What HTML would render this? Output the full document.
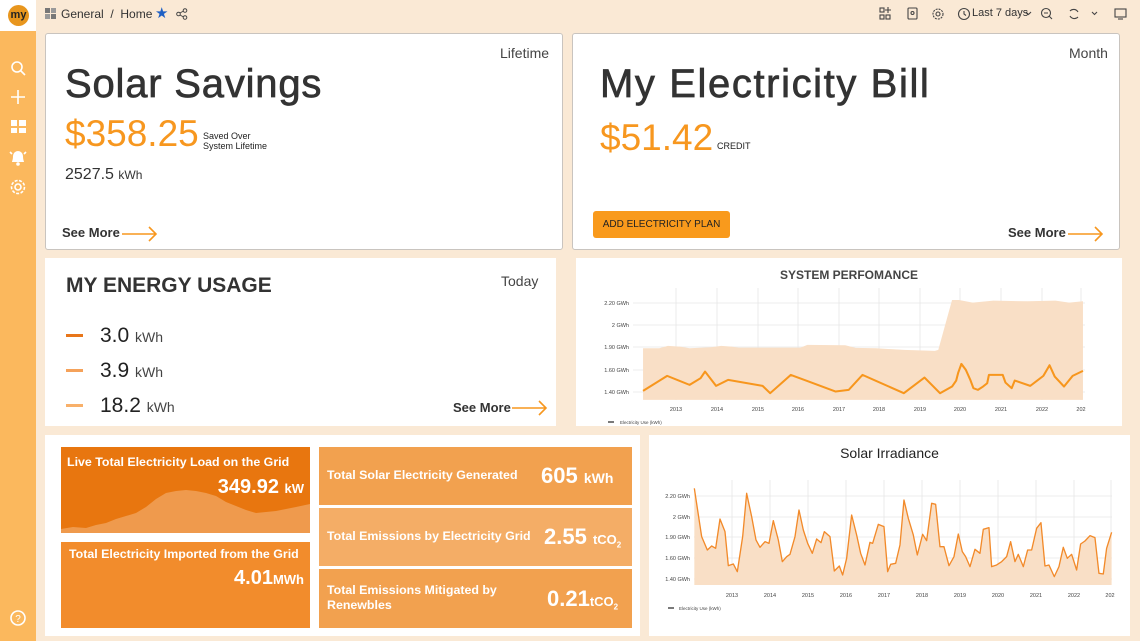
<!DOCTYPE html>
<html><head><meta charset="utf-8"><style>
*{margin:0;padding:0;box-sizing:border-box}
body{width:1140px;height:641px;overflow:hidden;background:#fae9d5;font-family:"Liberation Sans",sans-serif;color:#333;position:relative}
.a{position:absolute}
.panel{position:absolute;background:#fff}
.bord{border:1px solid #c9c4bf;border-radius:3px}
.t{position:absolute;white-space:nowrap}
.tile{position:absolute;color:#fff;overflow:hidden}
.sm{font-size:13px;font-weight:bold;color:#333}
.big{font-size:40px;color:#333;-webkit-text-stroke:0.7px #333}
.tl{font-size:12.4px;font-weight:bold}
</style></head><body>
<!-- sidebar -->
<div class="a" style="left:0;top:0;width:36px;height:31px;background:#fff"></div>
<div class="a" style="left:8px;top:5px;width:21px;height:21px;border-radius:50%;background:#e8961e;color:#222;font-size:11px;font-weight:bold;text-align:center;line-height:20px">my</div>
<div class="a" style="left:0;top:31px;width:36px;height:610px;background:#fbb85d"></div>
<svg class="a" style="left:0;top:31px" width="36" height="610" fill="none" stroke="#fff" stroke-width="1.6">
<circle cx="17" cy="36" r="5"/><path d="M21 40l4 4"/>
<path d="M18 59v14M11 66h14"/>
<g fill="#fff" stroke="none"><rect x="11" y="89" width="6" height="6"/><rect x="19" y="89" width="7" height="6"/><rect x="11" y="97" width="6" height="5"/><rect x="19" y="97" width="7" height="5"/>
<path d="M12 131c0-1 1-2 1-6a5 5 0 0 1 10 0c0 4 1 5 1 6z"/><circle cx="18" cy="133" r="1.8"/></g>
<path d="M10 121l2 2M26 121l-2 2"/>
<circle cx="18" cy="156" r="3"/><circle cx="18" cy="156" r="6.5" stroke-dasharray="3 1.5"/>
<circle cx="18" cy="587" r="7"/><text x="18" y="591" fill="#fff" stroke="none" font-size="10" text-anchor="middle" font-family="Liberation Sans">?</text>
</svg>
<!-- top bar -->
<svg class="a" style="left:45px;top:8px" width="12" height="12"><rect x="0" y="0" width="5" height="5" fill="#777"/><rect x="6" y="0" width="5" height="5" fill="#999"/><rect x="0" y="6" width="5" height="5" fill="#999"/><rect x="6" y="6" width="5" height="5" fill="#777"/></svg>
<div class="t" style="left:61px;top:7px;font-size:12px;color:#333">General&nbsp; /&nbsp; Home</div>
<div class="t" style="left:155px;top:4px;font-size:15px;color:#1f60c4">★</div>
<svg class="a" style="left:176px;top:8px" width="12" height="12" fill="none" stroke="#444" stroke-width="1"><circle cx="9" cy="2.5" r="1.8"/><circle cx="2.5" cy="6" r="1.8"/><circle cx="9" cy="9.5" r="1.8"/><path d="M4 5l3.5-2M4 7l3.5 2"/></svg>
<svg class="a" style="left:878px;top:6px" width="250" height="18" fill="none" stroke="#444" stroke-width="1.1">
<rect x="2" y="2" width="4" height="4"/><rect x="2" y="9" width="4" height="4"/><rect x="8" y="9" width="4" height="4"/><path d="M10 1v6M7 4h6"/>
<rect x="30" y="2" width="9" height="11" rx="1"/><circle cx="34.5" cy="7" r="1.5"/>
<circle cx="60" cy="8" r="5" stroke-dasharray="2 1"/><circle cx="60" cy="8" r="2"/>
<circle cx="86" cy="8" r="5.5"/><path d="M86 5v3l2 1.5"/>
<path d="M148 6l2.5 2.5L153 6"/>
<circle cx="168" cy="7" r="4.5"/><path d="M166 7h4M171 10l3 3"/>
<path d="M192 5a5 5 0 0 1 8 1M200 11a5 5 0 0 1-8-1"/>
<path d="M214 6l2.5 2.5L219 6"/>
<rect x="237" y="3" width="11" height="8"/><path d="M240 13h5"/>
</svg>
<div class="t" style="left:972px;top:7px;font-size:11px;color:#333">Last 7 days</div>

<!-- Solar Savings -->
<div class="panel bord" style="left:45px;top:33px;width:518px;height:217px"></div>
<div class="t" style="left:500px;top:45px;font-size:14px;color:#444">Lifetime</div>
<div class="t big" style="left:65px;top:62px;letter-spacing:0.8px">Solar Savings</div>
<div class="t" style="left:65px;top:113px;font-size:37px;color:#f7971f">$358.25</div>
<div class="t" style="left:203px;top:131px;font-size:9px;line-height:10px;color:#222">Saved Over<br>System Lifetime</div>
<div class="t" style="left:65px;top:166px;font-size:16px;color:#333">2527.5 <span style="font-size:12px">kWh</span></div>
<div class="t sm" style="left:62px;top:225px">See More</div>
<svg class="a" style="left:122px;top:226px" width="37" height="16" fill="none" stroke="#f7971f" stroke-width="1.6"><path d="M0 8h34M27 1l7 7-7 7"/></svg>

<!-- Electricity Bill -->
<div class="panel bord" style="left:572px;top:33px;width:548px;height:217px"></div>
<div class="t" style="left:1069px;top:45px;font-size:14px;color:#444">Month</div>
<div class="t big" style="left:600px;top:62px;letter-spacing:1.6px">My Electricity Bill</div>
<div class="t" style="left:600px;top:117px;font-size:37px;color:#f7971f">$51.42</div>
<div class="t" style="left:717px;top:141px;font-size:9px;color:#222">CREDIT</div>
<div class="a" style="left:593px;top:211px;width:137px;height:27px;background:#f99a1c;border-radius:3px;font-size:10px;color:#222;text-align:center;line-height:27px">ADD ELECTRICITY PLAN</div>
<div class="t sm" style="left:1008px;top:225px">See More</div>
<svg class="a" style="left:1068px;top:226px" width="37" height="16" fill="none" stroke="#f7971f" stroke-width="1.6"><path d="M0 8h34M27 1l7 7-7 7"/></svg>

<!-- Energy usage -->
<div class="panel" style="left:45px;top:258px;width:511px;height:168px"></div>
<div class="t" style="left:66px;top:274px;font-size:21px;font-weight:bold;color:#333">MY ENERGY USAGE</div>
<div class="t" style="left:501px;top:273px;font-size:14px;color:#444">Today</div>
<div class="a" style="left:66px;top:334px;width:17px;height:3px;background:#e8761a"></div>
<div class="a" style="left:66px;top:369px;width:17px;height:3px;background:#f5a25a"></div>
<div class="a" style="left:66px;top:404px;width:17px;height:3px;background:#f8b06a"></div>
<div class="t" style="left:100px;top:324px;font-size:21px;color:#222">3.0 <span style="font-size:14px;color:#444">kWh</span></div>
<div class="t" style="left:100px;top:359px;font-size:21px;color:#222">3.9 <span style="font-size:14px;color:#444">kWh</span></div>
<div class="t" style="left:100px;top:394px;font-size:21px;color:#222">18.2 <span style="font-size:14px;color:#444">kWh</span></div>
<div class="t sm" style="left:453px;top:400px">See More</div>
<svg class="a" style="left:512px;top:400px" width="37" height="16" fill="none" stroke="#f7971f" stroke-width="1.6"><path d="M0 8h34M27 1l7 7-7 7"/></svg>

<!-- System performance -->
<div class="panel" style="left:576px;top:258px;width:546px;height:168px"></div>
<div class="panel" style="left:649px;top:435px;width:481px;height:201px"></div>
<div class="t" style="left:576px;top:268px;width:546px;text-align:center;font-size:12px;font-weight:bold;color:#444">SYSTEM PERFOMANCE</div>
<svg class="a" style="left:0;top:0" width="1140" height="641" font-family="Liberation Sans" font-size="5.5" fill="#444">
<g stroke="#e6e6e6" stroke-width="0.8"><path d="M633 303H1085M633 325H1085M633 347H1085M633 370H1085M633 392H1085"/>
<path d="M676 288V400M717 288V400M758 288V400M798 288V400M839 288V400M879 288V400M920 288V400M960 288V400M1001 288V400M1042 288V400M1081 288V400"/></g>
<g transform="translate(580,260) scale(0.3445,0.333)">
<path d="M183 265L230 265L255 258L290 260L318 265L380 262L410 258L440 260L460 263L640 263L660 255L770 256L800 264L860 265L940 270L1030 273L1040 270L1080 120L1100 120L1140 128L1200 122L1300 124L1380 122L1420 128L1460 124L1460 420L183 420Z" fill="#f9dfc6"/>
<polyline fill="none" stroke="#f7961d" stroke-width="6" stroke-linejoin="round" points="183,393 253,348 318,375 350,355 363,335 395,378 430,360 530,378 552,400 612,345 742,395 780,390 820,345 940,400 1000,353 1045,400 1080,380 1092,362 1098,338 1107,312 1120,330 1133,360 1142,385 1155,390 1170,380 1182,370 1187,345 1227,345 1235,368 1253,385 1262,362 1307,378 1345,348 1363,316 1378,350 1405,380 1430,348 1460,333"/>
</g>
<g text-anchor="end"><text x="629" y="305">2.20 GWh</text><text x="629" y="327">2 GWh</text><text x="629" y="349">1.90 GWh</text><text x="629" y="372">1.60 GWh</text><text x="629" y="394">1.40 GWh</text></g>
<g text-anchor="middle"><text x="676" y="411">2013</text><text x="717" y="411">2014</text><text x="758" y="411">2015</text><text x="798" y="411">2016</text><text x="839" y="411">2017</text><text x="879" y="411">2018</text><text x="920" y="411">2019</text><text x="960" y="411">2020</text><text x="1001" y="411">2021</text><text x="1042" y="411">2022</text><text x="1081" y="411">202</text></g>
<path d="M608 422h6" stroke="#222" stroke-width="1.2"/><text x="620" y="424" font-size="4.5">Electricity Use (kWh)</text>

<!-- solar irradiance chart -->
<g stroke="#e6e6e6" stroke-width="0.8"><path d="M694 496H1112M694 517H1112M694 537H1112M694 558H1112M694 579H1112"/>
<path d="M732 480V585M770 480V585M808 480V585M846 480V585M884 480V585M922 480V585M960 480V585M998 480V585M1036 480V585M1074 480V585M1111 480V585"/></g>
<g transform="translate(650,440) scale(0.3333)">
<polygon fill="#f9dfc6" points="133,145 155,290 172,330 185,318 197,325 210,237 225,275 235,377 250,372 262,395 278,290 290,160 305,230 318,300 330,322 345,305 357,310 370,242 385,300 397,365 410,350 420,343 435,290 447,210 460,270 473,310 487,340 500,297 513,308 523,275 540,290 553,393 568,378 578,405 590,355 605,225 620,285 632,340 645,375 660,307 668,310 685,253 702,260 713,395 722,373 737,370 750,315 762,180 775,235 790,285 802,345 818,283 830,302 845,190 857,193 870,320 882,320 897,377 912,350 925,282 937,335 947,350 960,380 975,328 990,340 1000,268 1017,263 1025,380 1040,375 1055,365 1070,350 1082,305 1095,365 1105,343 1120,380 1133,330 1145,330 1160,265 1173,248 1185,378 1197,375 1213,410 1227,380 1240,322 1252,355 1265,343 1280,390 1292,312 1305,303 1320,287 1335,293 1347,400 1360,402 1370,325 1385,277 1385,435 133,435"/>
<polyline fill="none" stroke="#f28a2a" stroke-width="4" stroke-linejoin="round" points="133,145 155,290 172,330 185,318 197,325 210,237 225,275 235,377 250,372 262,395 278,290 290,160 305,230 318,300 330,322 345,305 357,310 370,242 385,300 397,365 410,350 420,343 435,290 447,210 460,270 473,310 487,340 500,297 513,308 523,275 540,290 553,393 568,378 578,405 590,355 605,225 620,285 632,340 645,375 660,307 668,310 685,253 702,260 713,395 722,373 737,370 750,315 762,180 775,235 790,285 802,345 818,283 830,302 845,190 857,193 870,320 882,320 897,377 912,350 925,282 937,335 947,350 960,380 975,328 990,340 1000,268 1017,263 1025,380 1040,375 1055,365 1070,350 1082,305 1095,365 1105,343 1120,380 1133,330 1145,330 1160,265 1173,248 1185,378 1197,375 1213,410 1227,380 1240,322 1252,355 1265,343 1280,390 1292,312 1305,303 1320,287 1335,293 1347,400 1360,402 1370,325 1385,277"/>
</g>
<g text-anchor="end"><text x="690" y="498">2.20 GWh</text><text x="690" y="519">2 GWh</text><text x="690" y="539">1.90 GWh</text><text x="690" y="560">1.60 GWh</text><text x="690" y="581">1.40 GWh</text></g>
<g text-anchor="middle"><text x="732" y="597">2013</text><text x="770" y="597">2014</text><text x="808" y="597">2015</text><text x="846" y="597">2016</text><text x="884" y="597">2017</text><text x="922" y="597">2018</text><text x="960" y="597">2019</text><text x="998" y="597">2020</text><text x="1036" y="597">2021</text><text x="1074" y="597">2022</text><text x="1110" y="597">202</text></g>
<path d="M668 608h6" stroke="#222" stroke-width="1.2"/><text x="679" y="610" font-size="4.5">Electricity Use (kWh)</text>
</svg>
<div class="t" style="left:649px;top:445px;width:481px;text-align:center;font-size:14px;color:#222">Solar Irradiance</div>

<!-- bottom-left container -->
<div class="panel" style="left:45px;top:435px;width:595px;height:201px"></div>
<div class="tile" style="left:61px;top:447px;width:249px;height:86px;background:#e8760f">
<svg class="a" style="left:0;top:0" width="249" height="86"><path d="M0 82L12 80L25 81L35 78L45 76L55 72L65 69L75 66L85 60L95 52L105 46L115 44L125 43L135 44L145 46L155 49L165 55L175 59L185 63L195 66L205 65L215 64L225 62L235 60L249 57L249 86L0 86Z" fill="#f0a158" opacity="0.85"/></svg>
<div class="t tl" style="left:6px;top:8px">Live Total Electricity Load on the Grid</div>
<div class="t" style="right:6px;top:29px;font-size:20px;font-weight:bold">349.92 <span style="font-size:13px">kW</span></div>
</div>
<div class="tile" style="left:61px;top:542px;width:249px;height:86px;background:#f28c2c">
<div class="t tl" style="left:8px;top:5px">Total Electricity Imported from the Grid</div>
<div class="t" style="right:6px;top:25px;font-size:20px;font-weight:bold">4.01<span style="font-size:13px">MWh</span></div>
</div>
<div class="tile" style="left:319px;top:447px;width:313px;height:58px;background:#f2a14f">
<div class="t tl" style="left:8px;top:21px">Total Solar Electricity Generated</div>
<div class="t" style="left:222px;top:16px;font-size:22px;font-weight:bold">605 <span style="font-size:14px">kWh</span></div>
</div>
<div class="tile" style="left:319px;top:508px;width:313px;height:58px;background:#f4ad66">
<div class="t tl" style="left:8px;top:21px">Total Emissions by Electricity Grid</div>
<div class="t" style="left:225px;top:16px;font-size:22px;font-weight:bold">2.55 <span style="font-size:13px">tCO<sub style="font-size:8px">2</sub></span></div>
</div>
<div class="tile" style="left:319px;top:569px;width:313px;height:59px;background:#f2a14f">
<div class="t tl" style="left:8px;top:14px;line-height:15px">Total Emissions Mitigated by<br>Renewbles</div>
<div class="t" style="left:228px;top:17px;font-size:22px;font-weight:bold">0.21<span style="font-size:13px">tCO<sub style="font-size:8px">2</sub></span></div>
</div>
</body></html>
